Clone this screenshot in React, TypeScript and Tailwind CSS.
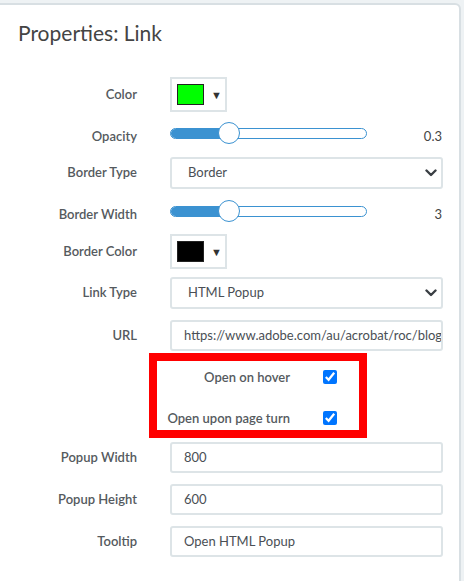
import React from "react";

const font = { fontFamily: "Lato, 'Liberation Sans', sans-serif" };

function Label({ children }: { children: React.ReactNode }) {
  return (
    <div className="w-[137px] shrink-0 text-right text-[13px] font-semibold text-[#555a5e]">
      {children}
    </div>
  );
}

function ColorBox({ color }: { color: string }) {
  return (
    <div className="flex h-[35px] w-[57px] items-center border-2 border-[#dde4e7] bg-white pl-[5px]">
      <div className="h-[21px] w-[27px] border border-[#222]" style={{ backgroundColor: color }} />
      <span className="ml-[7px] text-[11px] leading-none text-[#333]">▼</span>
    </div>
  );
}

function Slider({ value }: { value: string }) {
  return (
    <div className="flex flex-1 items-center">
      <div className="relative -mt-[8px] h-[11px] w-[197px] rounded-full border border-[#3b92d1] bg-white">
        <div className="h-full w-[59px] rounded-l-full bg-[#3b92d1]" />
        <div className="absolute left-[47px] top-1/2 h-[22px] w-[22px] -translate-y-1/2 rounded-full border border-[#3b92d1] bg-white" />
      </div>
      <div className="flex-1 text-right text-[13px] text-[#444]">{value}</div>
    </div>
  );
}

function Select({ value }: { value: string }) {
  return (
    <div className="flex h-[32px] w-[273px] items-center justify-between rounded-[3px] border-2 border-[#dde4e7] bg-white pl-[16px] pr-[4px] text-[13px] text-[#4a4f55]">
      <span>{value}</span>
      <svg width="12" height="8" viewBox="0 0 12 8" fill="none">
        <path d="M1.5 1.5 L6 6 L10.5 1.5" stroke="#3a3f44" strokeWidth="2.4" strokeLinecap="round" strokeLinejoin="round" />
      </svg>
    </div>
  );
}

function TextInput({ value }: { value: string }) {
  return (
    <div className="flex h-[31px] w-[273px] items-center overflow-hidden whitespace-nowrap rounded-[3px] border-2 border-[#dde4e7] bg-white pl-[12px] text-[13px] text-[#4a4f55]">
      {value}
    </div>
  );
}

function Row({ children, className }: { children: React.ReactNode; className: string }) {
  return <div className={`flex items-center gap-[33px] ${className}`}>{children}</div>;
}

export default function App() {
  return (
    <div className="h-[581px] w-[464px] overflow-hidden bg-[#eef2f4]" style={font}>
      <div className="ml-[-6px] mt-[3px] h-[600px] w-[467px] rounded-md border-2 border-[#d8dfe3] bg-white pl-[4px]">
        <div className="pl-[18px] pt-[15px] text-[21px] leading-[25px] text-[#444]">Properties: Link</div>

        <div className="flex flex-col">
          <Row className="mt-[32px] h-[35px]">
            <Label>Color</Label>
            <ColorBox color="#00ff00" />
          </Row>
          <Row className="mt-[14px] h-[22px] pr-[17px]">
            <Label>Opacity</Label>
            <Slider value="0.3" />
          </Row>
          <Row className="mt-[9px] h-[32px]">
            <Label>Border Type</Label>
            <Select value="Border" />
          </Row>
          <Row className="mt-[15px] h-[22px] pr-[17px]">
            <Label>Border Width</Label>
            <Slider value="3" />
          </Row>
          <Row className="mt-[8px] h-[35px]">
            <Label>Border Color</Label>
            <ColorBox color="#000000" />
          </Row>
          <Row className="mt-[8px] h-[32px]">
            <Label>Link Type</Label>
            <Select value="HTML Popup" />
          </Row>
          <Row className="mt-[11px] h-[31px]">
            <Label>URL</Label>
            <TextInput value="https://www.adobe.com/au/acrobat/roc/blog/what-is-html-popup" />
          </Row>

          <div className="ml-[149px] mt-[2px] h-[85px] w-[218px] border-[8px] border-[#ff0000]">
            <div className="flex h-[32px] items-center gap-[33px]">
              <div className="w-[133px] pt-[1px] text-right text-[13px] font-semibold text-[#555a5e]">Open on hover</div>
              <input type="checkbox" defaultChecked className="m-0 h-[14px] w-[14px]" />
            </div>
            <div className="mt-[9px] flex h-[32px] items-center gap-[33px]">
              <div className="w-[133px] pt-[1px] text-right text-[13px] font-semibold text-[#555a5e]">Open upon page turn</div>
              <input type="checkbox" defaultChecked className="m-0 h-[14px] w-[14px]" />
            </div>
          </div>

          <Row className="mt-[4px] h-[31px]">
            <Label>Popup Width</Label>
            <TextInput value="800" />
          </Row>
          <Row className="mt-[11px] h-[31px]">
            <Label>Popup Height</Label>
            <TextInput value="600" />
          </Row>
          <Row className="mt-[11px] h-[31px]">
            <Label>Tooltip</Label>
            <TextInput value="Open HTML Popup" />
          </Row>
        </div>
      </div>
    </div>
  );
}
